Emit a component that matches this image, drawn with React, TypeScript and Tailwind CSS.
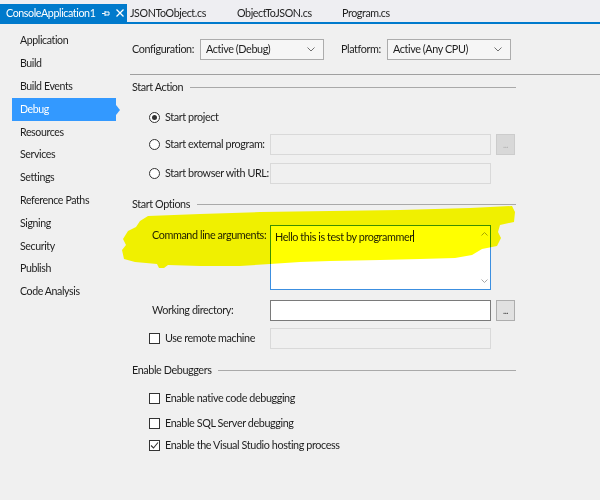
import React from 'react';

const font = { fontFamily: 'Lato, "Open Sans", sans-serif', letterSpacing: '-0.4px' };

const navItems = [
  'Application',
  'Build',
  'Build Events',
  'Debug',
  'Resources',
  'Services',
  'Settings',
  'Reference Paths',
  'Signing',
  'Security',
  'Publish',
  'Code Analysis',
];

const Chevron = () => (
  <svg width="8" height="5" viewBox="0 0 8 5" className="shrink-0">
    <path d="M0.5 0.5 L4 4 L7.5 0.5" fill="none" stroke="#707070" strokeWidth="1" />
  </svg>
);

const Select = ({ value, width }: { value: string; width: string }) => (
  <div className={`${width} h-[21px] flex items-center justify-between pl-[5px] pr-[8px] bg-[#f6f6f6] border border-[#acacac] shrink-0`}>
    <span>{value}</span>
    <Chevron />
  </div>
);

const SectionHeader = ({ title }: { title: string }) => (
  <div className="h-[20px] flex items-center w-[384px]">
    <span className="pr-[7px]">{title}</span>
    <div className="flex-1 h-px bg-[#a9a9a9]" />
  </div>
);

const Radio = ({ checked }: { checked?: boolean }) => (
  <div className="w-[11px] h-[11px] rounded-full border border-[#333] bg-white flex items-center justify-center shrink-0">
    {checked && <div className="w-[5px] h-[5px] rounded-full bg-[#333]" />}
  </div>
);

const Check = ({ checked }: { checked?: boolean }) => (
  <div className="w-[11px] h-[11px] border border-[#333] bg-white flex items-center justify-center shrink-0">
    {checked && (
      <svg width="9" height="9" viewBox="0 0 9 9">
        <path d="M1 4.5 L3.5 7 L8 1.5" fill="none" stroke="#333" strokeWidth="1.1" />
      </svg>
    )}
  </div>
);

const TextBox = ({ variant }: { variant: 'disabled' | 'normal' }) => (
  <div
    className={
      variant === 'disabled'
        ? 'w-[221px] h-[21px] bg-[#f0f0f0] border border-[#d9d9d9] shrink-0'
        : 'w-[221px] h-[21px] bg-white border border-[#7a7a7a] shrink-0'
    }
  />
);

const Browse = ({ disabled }: { disabled?: boolean }) => (
  <div
    className={
      disabled
        ? 'ml-[5px] w-[19px] h-[21px] bg-[#d8d8d8] border border-[#cccccc] flex items-center justify-center text-[9px] text-[#b0b0b0] leading-none shrink-0'
        : 'ml-[5px] w-[19px] h-[21px] bg-[#e1e1e1] border border-[#adadad] flex items-center justify-center text-[9px] text-[#333] leading-none shrink-0'
    }
  >
    ...
  </div>
);

export default function App() {
  return (
    <div className="relative w-[600px] h-[500px] overflow-hidden bg-[#f0f0f0] text-[10.8px] text-[#1e1e1e] whitespace-nowrap" style={font}>
      {/* document tabs */}
      <div className="h-[24px] pt-[4px] flex items-stretch bg-[#eeeef2] border-b-2 border-[#007acc]">
        <div className="w-[127px] bg-[#007acc] text-white flex items-center pl-[6px] text-[10.7px]">
          <span>ConsoleApplication1</span>
          <svg width="9" height="9" viewBox="0 0 9 9" className="ml-[7px]">
            <path d="M0 4.5 H3 M3 2 V7 M3 3 H7 V6 H3" fill="none" stroke="#fff" strokeWidth="1" />
          </svg>
          <svg width="8" height="8" viewBox="0 0 8 8" className="ml-[5px]">
            <path d="M0.5 0.5 L7.5 7.5 M7.5 0.5 L0.5 7.5" stroke="#fff" strokeWidth="1.3" />
          </svg>
        </div>
        <div className="flex items-center pl-[3px] text-[10.7px]">
          <span className="w-[107px]">JSONToObject.cs</span>
          <span className="w-[105px]">ObjectToJSON.cs</span>
          <span>Program.cs</span>
        </div>
      </div>

      <div className="flex">
        {/* property page list */}
        <div className="w-[120px] pt-[6px] text-[10.6px] shrink-0">
          {navItems.map((item) =>
            item === 'Debug' ? (
              <div key={item} className="h-[22.8px] flex items-center pl-[12px]">
                <div className="w-[104px] h-[23px] bg-[#3399ff] text-white flex items-center pl-[8px]">{item}</div>
                <svg width="4" height="10" viewBox="0 0 4 10">
                  <path d="M0 0 L4 5 L0 10 Z" fill="#3399ff" />
                </svg>
              </div>
            ) : (
              <div key={item} className="h-[22.8px] flex items-center pl-[20px]">
                {item}
              </div>
            )
          )}
        </div>

        {/* debug page */}
        <div className="flex-1 flex flex-col pl-[12px]">
          <div className="mt-[15px] h-[21px] flex items-center">
            <span className="w-[68px]">Configuration:</span>
            <Select value="Active (Debug)" width="w-[124px]" />
            <span className="ml-[17px] w-[46px]">Platform:</span>
            <Select value="Active (Any CPU)" width="w-[124px]" />
          </div>

          <div className="mt-[14px] -ml-[2px] h-px bg-[#a0a0a0]" />

          <div className="mt-[2px]">
            <SectionHeader title="Start Action" />
          </div>

          <div className="mt-[9px] h-[22px] flex items-center pl-[17px]">
            <Radio checked />
            <span className="ml-[5px]">Start project</span>
          </div>
          <div className="mt-[6px] h-[21px] flex items-center pl-[17px]">
            <Radio />
            <span className="ml-[5px] w-[105px]">Start external program:</span>
            <TextBox variant="disabled" />
            <Browse disabled />
          </div>
          <div className="mt-[8px] h-[21px] flex items-center pl-[17px]">
            <Radio />
            <span className="ml-[5px] w-[105px]">Start browser with URL:</span>
            <TextBox variant="disabled" />
          </div>

          <div className="mt-[10px]">
            <SectionHeader title="Start Options" />
          </div>

          <div className="mt-[11px] flex items-start pl-[20px]">
            <span className="w-[118px] pt-[2px]">Command line arguments:</span>
            <div className="w-[221px] h-[65px] bg-white border border-[#3c8fe0] flex shrink-0">
              <div className="flex-1 pl-[4px] pt-[3px] flex items-start">
                <span>Hello this is test by programmer</span>
                <div className="w-px h-[12px] bg-[#1e1e1e] mt-[1px]" />
              </div>
              <div className="w-[12px] flex flex-col justify-between items-center py-[6px]">
                <svg width="7" height="4" viewBox="0 0 7 4">
                  <path d="M0.5 3.5 L3.5 0.5 L6.5 3.5" fill="none" stroke="#a6a6a6" strokeWidth="1" />
                </svg>
                <svg width="7" height="4" viewBox="0 0 7 4">
                  <path d="M0.5 0.5 L3.5 3.5 L6.5 0.5" fill="none" stroke="#a6a6a6" strokeWidth="1" />
                </svg>
              </div>
            </div>
          </div>

          <div className="mt-[10px] h-[21px] flex items-center pl-[20px]">
            <span className="w-[118px]">Working directory:</span>
            <TextBox variant="normal" />
            <Browse />
          </div>
          <div className="mt-[7px] h-[21px] flex items-center pl-[17px]">
            <Check />
            <span className="ml-[5px] w-[105px]">Use remote machine</span>
            <TextBox variant="disabled" />
          </div>

          <div className="mt-[11px]">
            <SectionHeader title="Enable Debuggers" />
          </div>

          <div className="mt-[8px] h-[20px] flex items-center pl-[17px]">
            <Check />
            <span className="ml-[5px]">Enable native code debugging</span>
          </div>
          <div className="mt-[5px] h-[20px] flex items-center pl-[17px]">
            <Check />
            <span className="ml-[5px]">Enable SQL Server debugging</span>
          </div>
          <div className="mt-[2px] h-[20px] flex items-center pl-[17px]">
            <Check checked />
            <span className="ml-[5px]">Enable the Visual Studio hosting process</span>
          </div>
        </div>
      </div>

      {/* yellow highlighter stroke drawn over the screenshot */}
      <svg className="absolute left-0 top-0 pointer-events-none mix-blend-multiply" width="600" height="500" viewBox="0 0 600 500">
        <path
          d="M148 216 L200 214 L260 212 L330 211 L400 210 L470 208 L512 206 L515 212 L514 222 L500 225 L498 232 L501 238 L497 246 L482 249 L472 255 L455 258 L420 259 L380 260 L330 261 L300 262 L270 264 L240 266 L200 266 L168 265 L164 268 L159 268 L157 264 L135 262 L124 259 L122 250 L126 245 L123 239 L128 231 L136 227 L140 221 Z"
          fill="#ffff00"
        />
      </svg>
    </div>
  );
}
